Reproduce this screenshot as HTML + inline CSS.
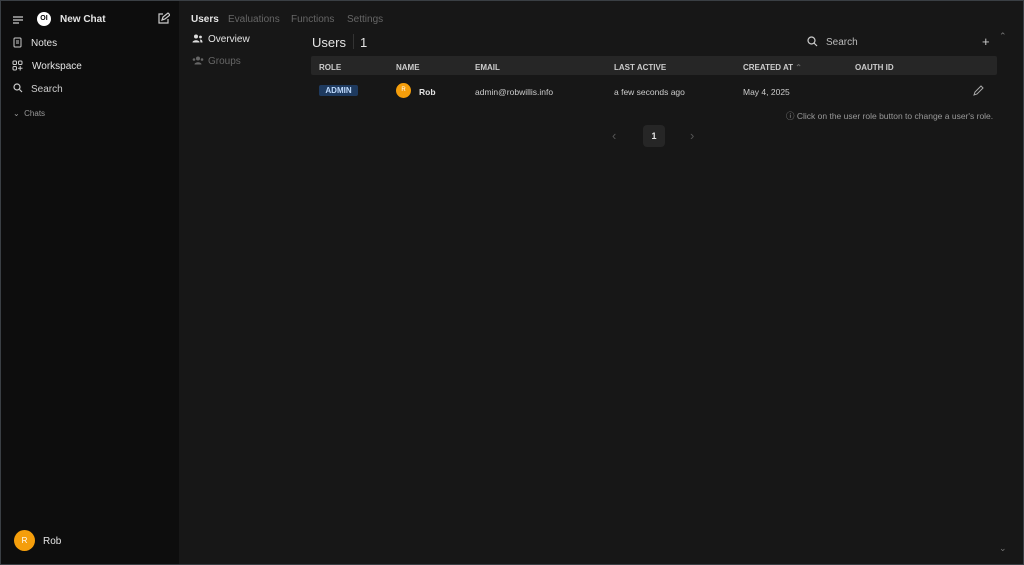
<!DOCTYPE html>
<html><head><style>
*{box-sizing:border-box;margin:0;padding:0}
body{width:1024px;height:565px;background:#171717;font-family:"Liberation Sans",sans-serif;color:#e5e5e5;position:relative;overflow:hidden}
.fr{position:absolute;left:0;top:0;width:1024px;height:565px;border:1px solid #3a3f44;pointer-events:none}
.sb{position:absolute;left:0;top:0;width:179px;height:565px;background:#0d0d0d}
.w{position:absolute;left:0;top:1px;width:1024px;height:564px}
.t{position:absolute;white-space:nowrap}
.hd{position:absolute;left:311px;top:56px;width:686px;height:19px;background:#262626;border-radius:2px}
.th{position:absolute;top:62px;font-size:8px;font-weight:bold;color:#ccc}
</style></head><body>
<div class="sb"></div>
<div class="hd"></div>
<div class="w">
<svg class="t" style="left:12px;top:14px" width="12" height="10"><path d="M1 2h10M1 5h10M1 8h6" stroke="#ccc" stroke-width="1.3"/></svg>
<div class="t" style="left:37px;top:11px;width:14px;height:14px;border-radius:50%;background:#fff;color:#000;font-size:7px;font-weight:bold;text-align:center;line-height:14px">OI</div>
<div class="t" style="left:60px;top:13px;font-size:10px;font-weight:bold">New Chat</div>
<svg class="t" style="left:157px;top:11px" width="13" height="13"><path d="M6 2H2v9h9V7M5 8l1-3 5-4 2 2-5 4z" stroke="#ccc" fill="none" stroke-width="1.2"/></svg>
<svg class="t" style="left:13px;top:36px" width="9" height="11"><rect x="1" y="1" width="7" height="9" rx="1" stroke="#ccc" fill="none"/><path d="M3 4h3M3 6h3" stroke="#ccc"/></svg>
<div class="t" style="left:31px;top:37px;font-size:10px">Notes</div>
<svg class="t" style="left:12px;top:59px" width="11" height="11"><rect x="1" y="1" width="3.5" height="3.5" rx="1" stroke="#ccc" fill="none"/><rect x="6.5" y="1" width="3.5" height="3.5" rx="1" stroke="#ccc" fill="none"/><rect x="1" y="6.5" width="3.5" height="3.5" rx="1" stroke="#ccc" fill="none"/><path d="M8.2 6v4.5M6 8.2h4.5" stroke="#ccc"/></svg>
<div class="t" style="left:32px;top:60px;font-size:10px">Workspace</div>
<svg class="t" style="left:13px;top:82px" width="10" height="10"><circle cx="4" cy="4" r="3" stroke="#ccc" fill="none" stroke-width="1.2"/><path d="M6.5 6.5L9 9" stroke="#ccc" stroke-width="1.2"/></svg>
<div class="t" style="left:31px;top:83px;font-size:10px;color:#ccc">Search</div>
<div class="t" style="left:13px;top:108px;font-size:8px;color:#999">⌄ &nbsp;Chats</div>
<div class="t" style="left:14px;top:529px;width:21px;height:21px;border-radius:50%;background:#f59e0b;color:#fff;font-size:8px;text-align:center;line-height:21px">R</div>
<div class="t" style="left:43px;top:535px;font-size:10px">Rob</div>

<div class="t" style="left:191px;top:13px;font-size:10px;font-weight:bold">Users</div>
<div class="t" style="left:228px;top:13px;font-size:10px;color:#666">Evaluations</div>
<div class="t" style="left:291px;top:13px;font-size:10px;color:#666">Functions</div>
<div class="t" style="left:347px;top:13px;font-size:10px;color:#666">Settings</div>
<svg class="t" style="left:192px;top:33px" width="11" height="9"><circle cx="4" cy="2.5" r="2" fill="#ddd"/><path d="M0.5 8.5c0-3 7-3 7 0z" fill="#ddd"/><circle cx="8.5" cy="3" r="1.4" fill="#ddd"/><path d="M8 5.5c2 0 2.5 1.5 2.5 3h-2z" fill="#ddd"/></svg>
<div class="t" style="left:208px;top:33px;font-size:10px">Overview</div>
<svg class="t" style="left:192px;top:55px" width="12" height="9"><circle cx="6" cy="2.5" r="2" fill="#666"/><path d="M2.5 8.5c0-3 7-3 7 0z" fill="#666"/><circle cx="2" cy="3.5" r="1.3" fill="#666"/><circle cx="10" cy="3.5" r="1.3" fill="#666"/></svg>
<div class="t" style="left:208px;top:55px;font-size:10px;color:#666">Groups</div>

<div class="t" style="left:312px;top:34px;font-size:13px">Users</div>
<div class="t" style="left:353px;top:33px;width:1px;height:15px;background:#333"></div>
<div class="t" style="left:360px;top:34px;font-size:13px">1</div>
<svg class="t" style="left:807px;top:35px" width="11" height="11"><circle cx="4.5" cy="4.5" r="3.5" stroke="#ccc" fill="none" stroke-width="1.2"/><path d="M7 7l3 3" stroke="#ccc" stroke-width="1.2"/></svg>
<div class="t" style="left:826px;top:36px;font-size:10px;color:#bbb">Search</div>
<div class="t" style="left:982px;top:33px;font-size:13px;color:#ccc">+</div>
<div class="t" style="left:999px;top:30px;font-size:9px;color:#777">⌃</div>
<div class="t" style="left:999px;top:542px;font-size:9px;color:#777">⌄</div>

<div class="th" style="left:319px">ROLE</div>
<div class="th" style="left:396px">NAME</div>
<div class="th" style="left:475px">EMAIL</div>
<div class="th" style="left:614px">LAST ACTIVE</div>
<div class="th" style="left:743px">CREATED AT <span style="color:#666">⌃</span></div>
<div class="th" style="left:855px">OAUTH ID</div>

<div class="t" style="left:319px;top:84px;width:39px;height:11px;background:#1e3a5f;border-radius:2px;color:#bfdbfe;font-size:8px;font-weight:bold;text-align:center;line-height:11px">ADMIN</div>
<div class="t" style="left:396px;top:82px;width:15px;height:15px;border-radius:50%;background:#f59e0b;color:#fff;font-size:6px;text-align:center;line-height:15px">R</div>
<div class="t" style="left:419px;top:86px;font-size:8.5px;font-weight:bold">Rob</div>
<div class="t" style="left:475px;top:86px;font-size:8.5px;color:#ccc">admin@robwillis.info</div>
<div class="t" style="left:614px;top:86px;font-size:8.5px;color:#ccc">a few seconds ago</div>
<div class="t" style="left:743px;top:86px;font-size:8.5px;color:#ccc">May 4, 2025</div>
<svg class="t" style="left:973px;top:84px" width="11" height="11"><path d="M1 10l1-3 6-6 2 2-6 6z" stroke="#aaa" fill="none"/></svg>
<div class="t" style="left:786px;top:109px;font-size:8.5px;color:#999">ⓘ Click on the user role button to change a user's role.</div>

<div class="t" style="left:612px;top:127px;font-size:13px;color:#555">‹</div>
<div class="t" style="left:643px;top:124px;width:22px;height:22px;background:#262626;border-radius:4px;font-size:9px;font-weight:bold;text-align:center;line-height:22px">1</div>
<div class="t" style="left:690px;top:127px;font-size:13px;color:#555">›</div>
</div>
<div class="fr"></div>
</body></html>
